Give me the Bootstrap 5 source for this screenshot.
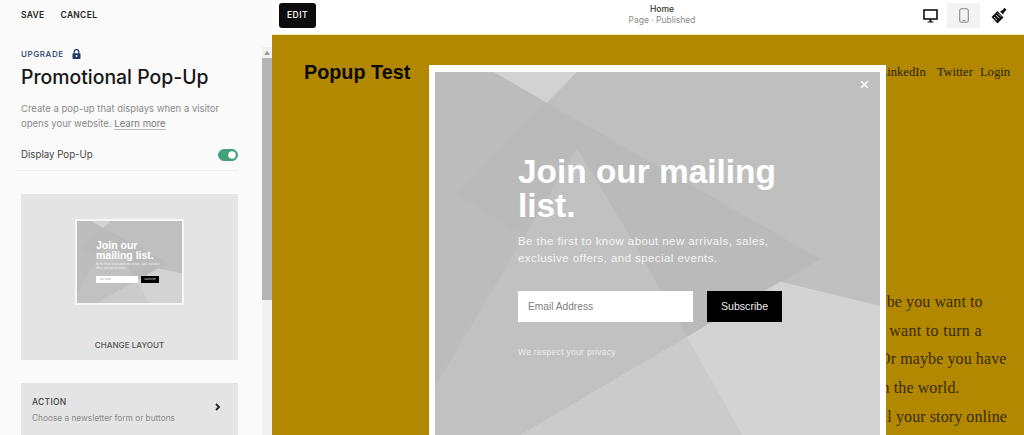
<!DOCTYPE html>
<html lang="en">
<head>
    <meta charset="UTF-8">
    <meta name="viewport" content="width=device-width, initial-scale=1.0">
    <title>Promotional Pop-Up</title>
    <link href="https://cdn.jsdelivr.net/npm/bootstrap@5.3.0/dist/css/bootstrap.min.css" rel="stylesheet">
    <style>
        html, body { height: 435px; overflow: hidden; }
        body { font-family: "Inter", "Liberation Sans", sans-serif; background: #fff; color: #111; }
        .side-col { width: 272px; height: 435px; flex: none; background: #fafafa; overflow: hidden; }
        .side-panel { width: 262px; flex: none; }
        .side-scroll { width: 10px; flex: none; margin-top: 47px; background: #f1f1f1; }
        .scroll-up { height: 11px; color: #999; font-size: 6px; line-height: 11px; text-align: center; }
        .scroll-thumb { height: 242px; background: #b5b5b5; }
        .side-top { height: 35px; padding: 9px 0 0 21px; gap: 16px; font-size: 8.5px; font-weight: 600; letter-spacing: .3px; color: #222; }
        .upgrade { margin: 12px 0 0 21px; height: 14px; gap: 8px; font-size: 8px; font-weight: 500; letter-spacing: .6px; color: #1f3a6e; }
        .side-title { margin: 1px 0 0 21px; font-size: 19.4px; line-height: 30px; font-weight: 500; color: #151515; }
        .side-desc { margin: 9px 0 0 21px; width: 225px; font-size: 9.5px; line-height: 15px; color: #8a8a8a; }
        .side-desc a { color: #777; text-decoration: none; border-bottom: 1px solid #bbb; }
        .display-row { margin: 17px 24px 0 17px; padding: 0 0 8px 4px; height: 23px; border-bottom: 1px solid #efefef; font-size: 9.7px; color: #444; }
        .display-row .form-check-input { width: 20px; height: 12px; margin: 0; background-color: #41a27a; border-color: #41a27a; }
        .display-row .form-switch { padding: 0; min-height: 0; margin: 0; line-height: 0; }
        .layout-box { margin: 23px 0 0 21px; width: 217px; height: 166px; background: #e4e4e4; padding-top: 25px; }
        .layout-label { margin-top: 33px; font-size: 8.1px; font-weight: 500; color: #555; line-height: 14px; }
        .mini-pop { width: 109px; height: 86px; border: 2px solid #f7f7f7; position: relative; overflow: hidden; background: #c4c4c4; }
        .mini-inner { position: relative; padding: 19px 0 0 19px; color: #fff; }
        .mini-bg { position: absolute; inset: 0; width: 100%; height: 100%; }
        .mini-title { font-family: "Liberation Sans", sans-serif; font-weight: 700; font-size: 10.5px; line-height: 10px; margin: 0; }
        .mini-text { font-family: "Liberation Sans", sans-serif; font-size: 2.6px; line-height: 4px; margin: 3px 0 0; width: 70px; color: #f2f2f2; }
        .mini-form { gap: 3px; margin-top: 5px; }
        .mini-input { width: 42px; height: 7px; background: #fff; color: #aaa; font-size: 2.4px; line-height: 7px; padding-left: 3px; }
        .mini-btn { width: 18px; height: 7px; background: #000; color: #ddd; font-size: 2.4px; line-height: 7px; text-align: center; }
        .action-box { margin: 23px 0 0 21px; width: 217px; height: 60px; background: #e4e4e4; padding: 12px 17px 0 11px; }
        .action-title { font-size: 8.5px; font-weight: 500; letter-spacing: .3px; color: #444; line-height: 14px; }
        .action-desc { font-size: 8.3px; color: #8a8a8a; line-height: 14px; margin-top: 2px; }
        .main-col { min-width: 0; }
        .tool-bar { height: 35px; flex: none; background: #fff; padding: 3px 0 0 7px; border-bottom: 1px solid #f3e6b4; }
        .edit-btn { width: 37px; height: 25px; padding: 0; background: #0c0c0c; border-radius: 3px; border: 0; color: #eee; font-size: 8.5px; font-weight: 600; letter-spacing: .4px; }
        .page-info { margin-left: 286px; width: 120px; text-align: center; font-size: 8.5px; line-height: 11px; padding-top: 1px; }
        .page-name { font-weight: 500; color: #333; }
        .page-state { color: #8a8a8a; }
        .device-toggle { margin-left: 192px; width: 66px; height: 25px; background: #f3f3f3; border-radius: 2px; }
        .device-on { width: 33px; background: #fff; }
        .device-off { width: 33px; }
        .brush-icon { margin: 4px 0 0 11px; }
        .site-canvas { position: relative; background: #b28800; overflow: hidden; }
        .site-head { padding: 24px 14px 0 32px; }
        .site-name { font-family: "Liberation Sans", sans-serif; font-weight: 700; font-size: 19.8px; line-height: 26px; color: #0c0900; }
        .site-nav { gap: 7px; font-family: "Liberation Serif", serif; font-size: 12.6px; line-height: 26px; color: #2e2300; }
        .story { position: absolute; left: 540px; top: 253px; font-family: "Liberation Serif", serif; font-size: 16px; line-height: 28.7px; letter-spacing: .1px; color: #3a2b00; white-space: nowrap; }
        .story-a { margin-left: 45px; }
        .story-b { margin-left: 48px; letter-spacing: .3px; }
        .story-c { margin-left: 67px; }
        .story-d { margin-left: 65px; }
        .story-e { margin-left: 59px; }
        .pop-frame { position: absolute; left: 157px; top: 30px; width: 457px; height: 500px; background: #fff; padding: 7px 6px; }
        .pop-inner { position: relative; height: 100%; background: #bebebe; padding: 83px 0 0 83px; color: #fff; }
        .pop-bg { position: absolute; left: 0; top: 0; width: 445px; height: 363px; }
        .pop-body { position: relative; }
        .pop-close { position: absolute; left: 425px; top: 8px; }
        .pop-title { font-family: "Liberation Sans", sans-serif; font-weight: 700; font-size: 33.4px; line-height: 33.5px; margin: 0; width: 290px; }
        .pop-text { font-family: "Liberation Sans", sans-serif; font-size: 11.5px; line-height: 17px; letter-spacing: .42px; margin: 11px 0 0; color: #f4f4f4; }
        .pop-form { margin-top: 24px; gap: 14px; }
        .pop-input { width: 175px; height: 31px; border: 0; border-radius: 0; padding: 0 10px; font-family: "Liberation Sans", sans-serif; font-size: 10.2px; color: #777; background: #fff; }
        .pop-input::placeholder { color: #808080; }
        .pop-btn { width: 75px; height: 31px; padding: 0; border: 0; border-radius: 0; background: #000; color: #eee; font-family: "Liberation Sans", sans-serif; font-size: 10.6px; }
        .pop-note { font-family: "Liberation Sans", sans-serif; font-size: 8.5px; letter-spacing: .3px; margin: 24px 0 0; color: #eee; }
    </style>
</head>
<body>
<svg width="0" height="0" class="position-absolute">
    <symbol id="popShapes" viewBox="15 36 1333 1089" preserveAspectRatio="none">
        <rect x="15" y="36" width="1333" height="1089" fill="#bfbfbf"/>
        <polygon points="15,36 190,36 350,128 80,403 770,830 270,1125 15,1125" fill="#bcbcbc"/>
        <polygon points="190,36 440,36 350,128" fill="#d2d2d2"/>
        <polygon points="80,403 350,128 1170,597 770,830" fill="#bababa"/>
        <polygon points="440,265 15,980 15,1125 935,1125 770,830 600,530" fill="#c1c1c1"/>
        <polygon points="1050,665 1348,738 1348,1125 270,1125" fill="#cbcbcb"/>
        <polygon points="1050,665 1348,738 1348,1125 935,1125 770,830" fill="#d3d3d3"/>
    </symbol>
</svg>
<div class="d-flex">
    <div class="side-col d-flex">
        <div class="side-panel">
            <div class="side-top d-flex"><span>SAVE</span><span>CANCEL</span></div>
            <div class="upgrade d-flex align-items-center">
                <span>UPGRADE</span>
                <svg width="9" height="10" viewBox="0 0 9 10"><path d="M2.2 4.5V3a2.3 2.3 0 0 1 4.6 0v1.5" fill="none" stroke="#1f3a6e" stroke-width="1.2"/><rect x=".5" y="4.2" width="8" height="5.8" rx=".8" fill="#1f3a6e"/><circle cx="4.5" cy="7" r=".9" fill="#fff"/></svg>
            </div>
            <h1 class="side-title">Promotional Pop-Up</h1>
            <p class="side-desc">Create a pop-up that displays when a visitor<br>opens your website. <a href="#">Learn more</a></p>
            <div class="display-row d-flex justify-content-between align-items-center">
                <span>Display Pop-Up</span>
                <div class="form-check form-switch"><input class="form-check-input" type="checkbox" checked></div>
            </div>
            <div class="layout-box d-flex flex-column align-items-center">
                <div class="mini-pop">
                    <svg class="mini-bg"><use href="#popShapes" width="100%" height="100%"/></svg>
                    <div class="mini-inner">
                        <p class="mini-title">Join our<br>mailing list.</p>
                        <p class="mini-text">Be the first to know about new arrivals, sales, exclusive offers, and special events.</p>
                        <div class="mini-form d-flex"><div class="mini-input">Your Email</div><div class="mini-btn">Subscribe</div></div>
                    </div>
                </div>
                <div class="layout-label">CHANGE LAYOUT</div>
            </div>
            <div class="action-box d-flex justify-content-between align-items-start">
                <div>
                    <div class="action-title">ACTION</div>
                    <div class="action-desc">Choose a newsletter form or buttons</div>
                </div>
                <svg class="mt-2" width="6" height="8" viewBox="0 0 6 8"><path d="M1 1l3 3-3 3" fill="none" stroke="#222" stroke-width="1.8"/></svg>
            </div>
        </div>
        <div class="side-scroll">
            <div class="scroll-up">▲</div>
            <div class="scroll-thumb"></div>
        </div>
    </div>
    <div class="main-col flex-grow-1 d-flex flex-column vh-100">
        <div class="tool-bar d-flex">
            <button class="edit-btn btn" type="button">EDIT</button>
            <div class="page-info">
                <div class="page-name">Home</div>
                <div class="page-state">Page · Published</div>
            </div>
            <div class="device-toggle d-flex">
                <div class="device-on d-flex align-items-center justify-content-center">
                    <svg width="15" height="14" viewBox="0 0 15 14"><rect x="1" y="1" width="13" height="9" fill="none" stroke="#111" stroke-width="1.6"/><path d="M6.5 10.5h2v2h-2zM4.5 12.4h6v1.2h-6z" fill="#111"/></svg>
                </div>
                <div class="device-off d-flex align-items-center justify-content-center">
                    <svg width="10" height="15" viewBox="0 0 10 15"><rect x=".7" y=".7" width="8.6" height="13.6" rx="1.8" fill="none" stroke="#888" stroke-width="1.1"/><path d="M3.5 12.4h3" stroke="#888"/></svg>
                </div>
            </div>
            <svg class="brush-icon" width="16" height="17" viewBox="0 0 16 17"><path d="M.5 10L6.5 4l6 6.5L6.5 16.5z" fill="#111"/><path d="M3 10l3 3.2M5 8l3 3.2M7 6.5l3 3" stroke="#fff" stroke-width=".8"/><path d="M9 4.5l2.3-1.2L13.5.8l2 2-2.3 2.4-1.2 2.2z" fill="#111"/></svg>
        </div>
        <div class="site-canvas flex-grow-1">
            <div class="site-head d-flex justify-content-between">
                <div class="site-name">Popup Test</div>
                <div class="site-nav d-flex"><span>Instagram</span><span>LinkedIn</span><span class="ms-1">Twitter</span><span>Login</span></div>
            </div>
            <div class="story">
                <div class="story-a">Maybe you want to</div>
                <div class="story-b">you want to turn a</div>
                <div class="story-c">Or maybe you have</div>
                <div class="story-d">in the world.</div>
                <div class="story-e">tell your story online</div>
            </div>
            <div class="pop-frame">
                <div class="pop-inner">
                    <svg class="pop-bg"><use href="#popShapes" width="445" height="363"/></svg>
                    <svg class="pop-close" width="9" height="9" viewBox="0 0 9 9"><path d="M1.2 1.2l6.6 6.6M7.8 1.2L1.2 7.8" stroke="#fff" stroke-width="1.5"/></svg>
                    <div class="pop-body">
                        <h2 class="pop-title">Join our mailing list.</h2>
                        <p class="pop-text">Be the first to know about new arrivals, sales,<br>exclusive offers, and special events.</p>
                        <form class="pop-form d-flex">
                            <input class="pop-input form-control" type="text" placeholder="Email Address">
                            <button class="pop-btn btn" type="button">Subscribe</button>
                        </form>
                        <p class="pop-note">We respect your privacy</p>
                    </div>
                </div>
            </div>
        </div>
    </div>
</div>
<script src="https://cdn.jsdelivr.net/npm/bootstrap@5.3.0/dist/js/bootstrap.bundle.min.js"></script>
</body>
</html>
